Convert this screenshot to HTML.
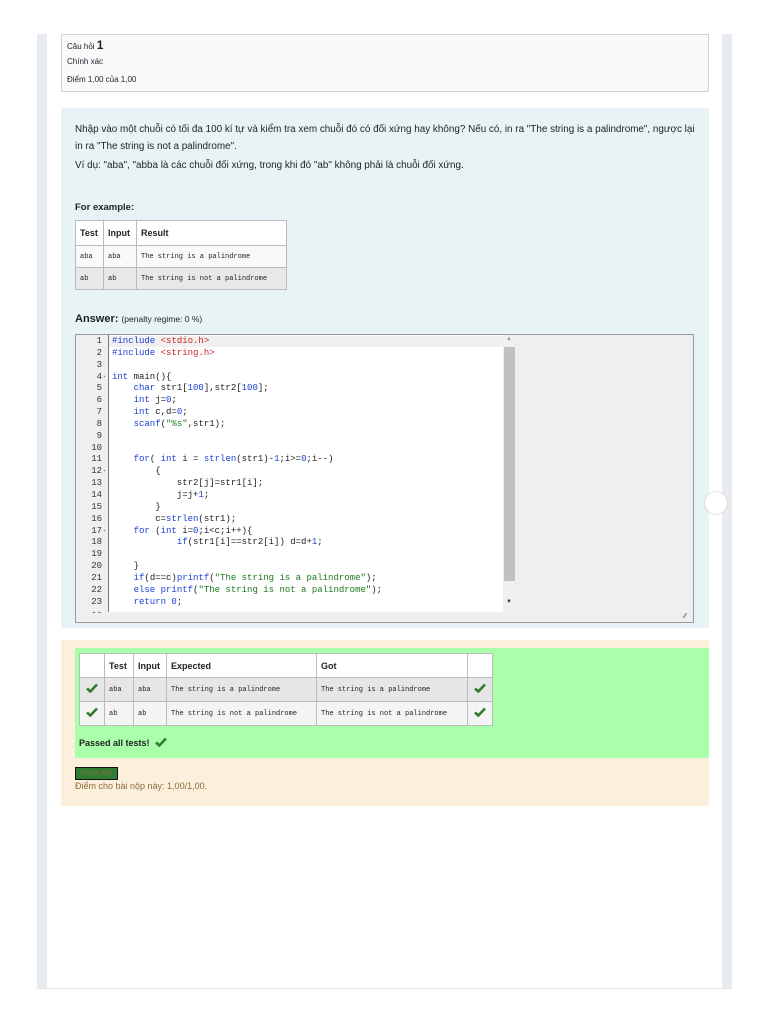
<!DOCTYPE html>
<html><head><meta charset="utf-8">
<style>
*{margin:0;padding:0;box-sizing:border-box}
body{width:768px;height:1024px;background:#fff;position:relative;font-family:"Liberation Sans",sans-serif;color:#1d2125;overflow:hidden}
.abs{position:absolute}
.strip{position:absolute;top:34px;height:955px;width:10px;background:#e8ebef}
.info{left:61px;top:34px;width:648px;height:58px;background:#f8f9fa;border:1px solid #cfd4da;font-size:8px}
.blue{left:61px;top:108px;width:648px;height:520px;background:#e7f3f5}
table{border-collapse:collapse;position:absolute}
td,th{border:1px solid #bbb;text-align:left;padding:0 4px}
.ex th{font-size:9px;height:25px;background:#fff}
.ex td{font-size:7px;font-family:"Liberation Mono",monospace;height:22px}
.code{left:75px;top:334px;width:619px;height:289px;background:#efefef;border:1px solid #999}
.gut{position:absolute;left:0;top:0;width:33px;height:277px;background:#efefef;border-right:1px solid #777}
.lines{position:absolute;left:0;top:0;font-family:"Liberation Mono",monospace;font-size:9px;line-height:11.85px}
.ln{display:block;height:11.85px;position:relative}
.ln i{position:absolute;left:27px;top:0;font-style:normal;font-size:5px;color:#888}
.kw{color:#1a3ed6}.st{color:#1a7a1a}.pp{color:#1a3ed6}.inc{color:#c22}.num{color:#1a3ed6}
.orange{left:61px;top:640px;width:648px;height:166px;background:#fcefdc}
.rt th{font-size:9px;height:24px;background:#fff;border-color:#bbb}
.rt td{font-size:7px;font-family:"Liberation Mono",monospace;height:24px}
.rt td.c{padding:0;text-align:center}
</style></head><body>
<svg width="0" height="0" style="position:absolute"><defs><symbol id="ck" viewBox="0 0 12 10"><path d="M1 5.5 L4.3 8.5 L11 1.5" fill="none" stroke="#2e7d32" stroke-width="2.6"/></symbol></defs></svg>
<div class="strip" style="left:37px"></div>
<div class="strip" style="left:722px"></div>
<div class="abs" style="left:37px;top:988px;width:695px;height:1px;background:#e2e5e8"></div>

<div class="abs info">
<div class="abs" style="left:5px;top:3px">Câu hỏi <span style="font-size:12px;font-weight:bold">1</span></div>
<div class="abs" style="left:5px;top:22px">Chính xác</div>
<div class="abs" style="left:5px;top:40px">Điểm 1,00 của 1,00</div>
</div>

<div class="abs blue">
<div class="abs" style="left:14px;top:13px;width:625px;font-size:9.9px;line-height:17px">Nhập vào một chuỗi có tối đa 100 kí tự và kiểm tra xem chuỗi đó có đối xứng hay không? Nếu có, in ra "The string is a palindrome", ngược lại in ra "The string is not a palindrome".</div>
<div class="abs" style="left:14px;top:52px;font-size:9.9px">Ví dụ: "aba", "abba là các chuỗi đối xứng, trong khi đó "ab" không phải là chuỗi đối xứng.</div>
<div class="abs" style="left:14px;top:94px;font-size:9.5px;font-weight:bold">For example:</div>
<table class="ex" style="left:14px;top:112px">
<tr><th style="width:28px">Test</th><th style="width:33px">Input</th><th style="width:150px">Result</th></tr>
<tr style="background:#f9f9f9"><td>aba</td><td>aba</td><td>The string is a palindrome</td></tr>
<tr style="background:#e8e8e8"><td>ab</td><td>ab</td><td>The string is not a palindrome</td></tr>
</table>
<div class="abs" style="left:14px;top:205px;font-size:11px;font-weight:bold">Answer: <span style="font-size:8.5px;font-weight:normal">(penalty regime: 0 %)</span></div>
</div>

<div class="abs code">
<div class="abs" style="left:0;top:0;width:427px;height:277px;background:#fff"></div>
<div class="abs" style="left:33px;top:1px;width:394px;height:11px;background:#f0f0f0"></div>
<div class="gut"></div>
<div class="lines" style="left:0;width:26px;text-align:right;color:#333;top:1px">
<span class="ln">1</span><span class="ln">2</span><span class="ln">3</span><span class="ln">4<i>▾</i></span><span class="ln">5</span><span class="ln">6</span><span class="ln">7</span><span class="ln">8</span><span class="ln">9</span><span class="ln">10</span><span class="ln">11</span><span class="ln">12<i>▾</i></span><span class="ln">13</span><span class="ln">14</span><span class="ln">15</span><span class="ln">16</span><span class="ln">17<i>▾</i></span><span class="ln">18</span><span class="ln">19</span><span class="ln">20</span><span class="ln">21</span><span class="ln">22</span><span class="ln">23</span><span class="ln" style="height:6px;overflow:hidden">--</span></div>
<pre class="lines" style="left:36px;top:1px;color:#222"><span class="pp">#include</span> <span class="inc">&lt;stdio.h&gt;</span>
<span class="pp">#include</span> <span class="inc">&lt;string.h&gt;</span>

<span class="kw">int</span> main(){
    <span class="kw">char</span> str1[<span class="num">100</span>],str2[<span class="num">100</span>];
    <span class="kw">int</span> j=<span class="num">0</span>;
    <span class="kw">int</span> c,d=<span class="num">0</span>;
    <span class="kw">scanf</span>(<span class="st">"%s"</span>,str1);


    <span class="kw">for</span>( <span class="kw">int</span> i = <span class="kw">strlen</span>(str1)-<span class="num">1</span>;i&gt;=<span class="num">0</span>;i--)
        {
            str2[j]=str1[i];
            j=j+<span class="num">1</span>;
        }
        c=<span class="kw">strlen</span>(str1);
    <span class="kw">for</span> (<span class="kw">int</span> i=<span class="num">0</span>;i&lt;c;i++){
            <span class="kw">if</span>(str1[i]==str2[i]) d=d+<span class="num">1</span>;

    }
    <span class="kw">if</span>(d==c)<span class="kw">printf</span>(<span class="st">"The string is a palindrome"</span>);
    <span class="kw">else</span> <span class="kw">printf</span>(<span class="st">"The string is not a palindrome"</span>);
    <span class="kw">return</span> <span class="num">0</span>;</pre>
<div class="abs" style="left:427px;top:0;width:13px;height:277px;background:#f0f0f0"></div>
<div class="abs" style="left:428px;top:12px;width:11px;height:234px;background:#c0c0c0"></div>
<div class="abs" style="left:430px;top:1px;font-size:6px;color:#999">▲</div>
<div class="abs" style="left:430px;top:264px;font-size:6px;color:#333">▼</div>
<div class="abs" style="left:608px;top:278px;font-size:7px;color:#555">⁄⁄</div>
</div>

<div class="abs" style="left:705px;top:492px;width:22px;height:22px;border-radius:50%;background:#fff;box-shadow:0 0 2px #bbb"></div>

<div class="abs orange">
<div class="abs" style="left:14px;top:8px;width:634px;height:110px;background:#aaffaa">
<table class="rt" style="left:4px;top:5px">
<tr><th style="width:25px"></th><th style="width:29px">Test</th><th style="width:33px">Input</th><th style="width:150px">Expected</th><th style="width:151px">Got</th><th style="width:25px"></th></tr>
<tr style="background:#e6e6e6"><td class="c"><svg width="12" height="10"><use href="#ck"/></svg></td><td>aba</td><td>aba</td><td>The string is a palindrome</td><td>The string is a palindrome</td><td class="c"><svg width="12" height="10"><use href="#ck"/></svg></td></tr>
<tr style="background:#f4f4f4"><td class="c"><svg width="12" height="10"><use href="#ck"/></svg></td><td>ab</td><td>ab</td><td>The string is not a palindrome</td><td>The string is not a palindrome</td><td class="c"><svg width="12" height="10"><use href="#ck"/></svg></td></tr>
</table>
<div class="abs" style="left:4px;top:89px;font-size:9px;font-weight:bold">Passed all tests! <svg width="12" height="10" style="margin-left:3px;vertical-align:-1px"><use href="#ck"/></svg></div>
</div>
<div class="abs" style="left:14px;top:127px;width:43px;height:13px;background:#2e7d32;border:1px solid #111;font-size:7px;color:#8a6d3b;text-align:center;line-height:11px">Chính xác</div>
<div class="abs" style="left:14px;top:141px;font-size:9px;color:#8a6d3b">Điểm cho bài nộp này: 1,00/1,00.</div>
</div>
</body></html>
